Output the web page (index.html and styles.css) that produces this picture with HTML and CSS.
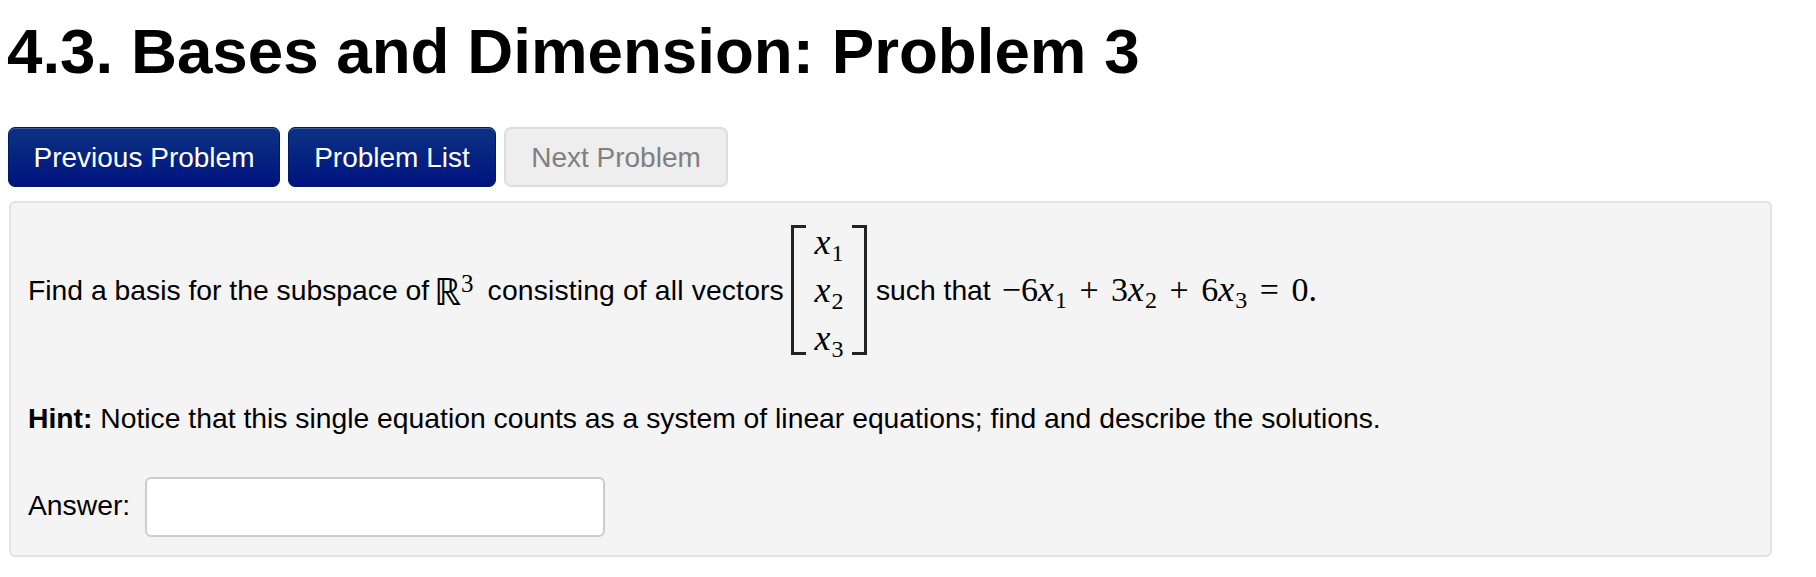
FILE: index.html
```html
<!DOCTYPE html>
<html lang="en">
<head>
    <meta charset="UTF-8">
    <title>4.3. Bases and Dimension: Problem 3</title>
    <link rel="stylesheet" href="styles.css">
</head>
<body>
    <h1>4.3. Bases and Dimension: Problem 3</h1>

    <div class="button-group">
        <a class="btn btn-primary">Previous Problem</a>
        <a class="btn btn-primary">Problem List</a>
        <a class="btn btn-disabled">Next Problem</a>
    </div>

    <div class="problem">
        <div class="statement">
            <span>Find a basis for the subspace of</span>
            <span class="math reals">ℝ<sup>3</sup></span>
            <span class="stretch">consisting of all vectors</span>
            <span class="matrix">
                <span class="math">x<sub>1</sub></span>
                <span class="math">x<sub>2</sub></span>
                <span class="math">x<sub>3</sub></span>
            </span>
            <span>such that</span>
            <span class="math equation"><span class="up">−6</span>x<sub>1</sub><span class="op">+</span><span class="up">3</span>x<sub>2</sub><span class="op">+</span><span class="up">6</span>x<sub>3</sub><span class="op">=</span><span class="up">0.</span></span>
        </div>

        <p class="hint"><strong>Hint:</strong> Notice that this single equation counts as a system of linear equations; find and describe the solutions.</p>

        <div class="answer">
            <label for="answer">Answer:</label>
            <input type="text" id="answer">
        </div>
    </div>
</body>
</html>
```

FILE: styles.css
```css
body {
    font-family: "Liberation Sans", Arial, sans-serif;
    font-size: 28.3px;
    color: #000;
    margin: 0;
    padding: 0 44px 0 9px;
    background-color: #fff;
}
h1 {
    font-size: 63.7px;
    line-height: 74px;
    margin: 0;
    padding: 14px 0 0;
    margin-left: -2px;
}
.button-group {
    display: flex;
    gap: 8px;
    margin: 39px 0 0 -1px;
}
.btn {
    display: block;
    height: 60px;
    line-height: 59px;
    padding: 0 24.5px;
    box-sizing: border-box;
    font-size: 28px;
    border-radius: 7px;
    border: 1px solid #001a66;
}
.btn + .btn {
    padding: 0 25.2px;
}
.btn-primary {
    color: #fff;
    background: linear-gradient(#0b3282, #00137f);
    box-shadow: inset 0 1px 0 rgba(255,255,255,0.2);
}
.btn-disabled {
    line-height: 57px;
    color: #808080;
    background-color: #eee;
    border: 2px solid #ddd;
}
.problem {
    margin-top: 14px;
    height: 356px;
    box-sizing: border-box;
    padding: 20px 17px;
    background-color: #f4f4f4;
    border: 2px solid #e3e3e3;
    border-radius: 6px;
}
.statement {
    display: flex;
    align-items: center;
    height: 134px;
    white-space: pre;
}
.stretch {
    letter-spacing: 0.15px;
}
.math {
    font-family: "Liberation Serif", serif;
    font-style: italic;
    font-size: 36px;
    letter-spacing: 1px;
}
.math sub, .math sup {
    font-size: 24px;
    font-style: normal;
    line-height: 0;
    letter-spacing: 0;
    vertical-align: -7px;
}
.math sup {
    font-size: 25px;
    vertical-align: 13px;
}
.up, .op {
    font-style: normal;
    font-size: 34px;
    letter-spacing: 0;
}
.op {
    margin: 0 12.5px;
}
.reals {
    font-style: normal;
    font-size: 38px;
    letter-spacing: 0;
    margin: 0 14px 0 5px;
}
.matrix {
    display: flex;
    flex-direction: column;
    justify-content: space-between;
    align-items: center;
    height: 130px;
    width: 76px;
    box-sizing: border-box;
    margin: 0 9px 0 7px;
    line-height: 34px;
    position: relative;
    border-left: 3px solid #222;
    border-right: 3px solid #222;
}
.matrix::before, .matrix::after {
    content: "";
    position: absolute;
    top: 0;
    bottom: 0;
    width: 12px;
    border-top: 3px solid #222;
    border-bottom: 3px solid #222;
}
.matrix::before {
    left: 0;
}
.matrix::after {
    right: 0;
}
.equation {
    margin: 0 0 2px 11px;
}
.hint {
    margin: 44px 0 0;
    line-height: 34px;
}
.answer {
    display: flex;
    align-items: center;
    gap: 15px;
    margin-top: 42px;
}
.answer label {
    padding-bottom: 4px;
}
.answer input {
    width: 460px;
    height: 60px;
    box-sizing: border-box;
    background-color: #fff;
    border: 2px solid #ccc;
    border-radius: 6px;
}
```
